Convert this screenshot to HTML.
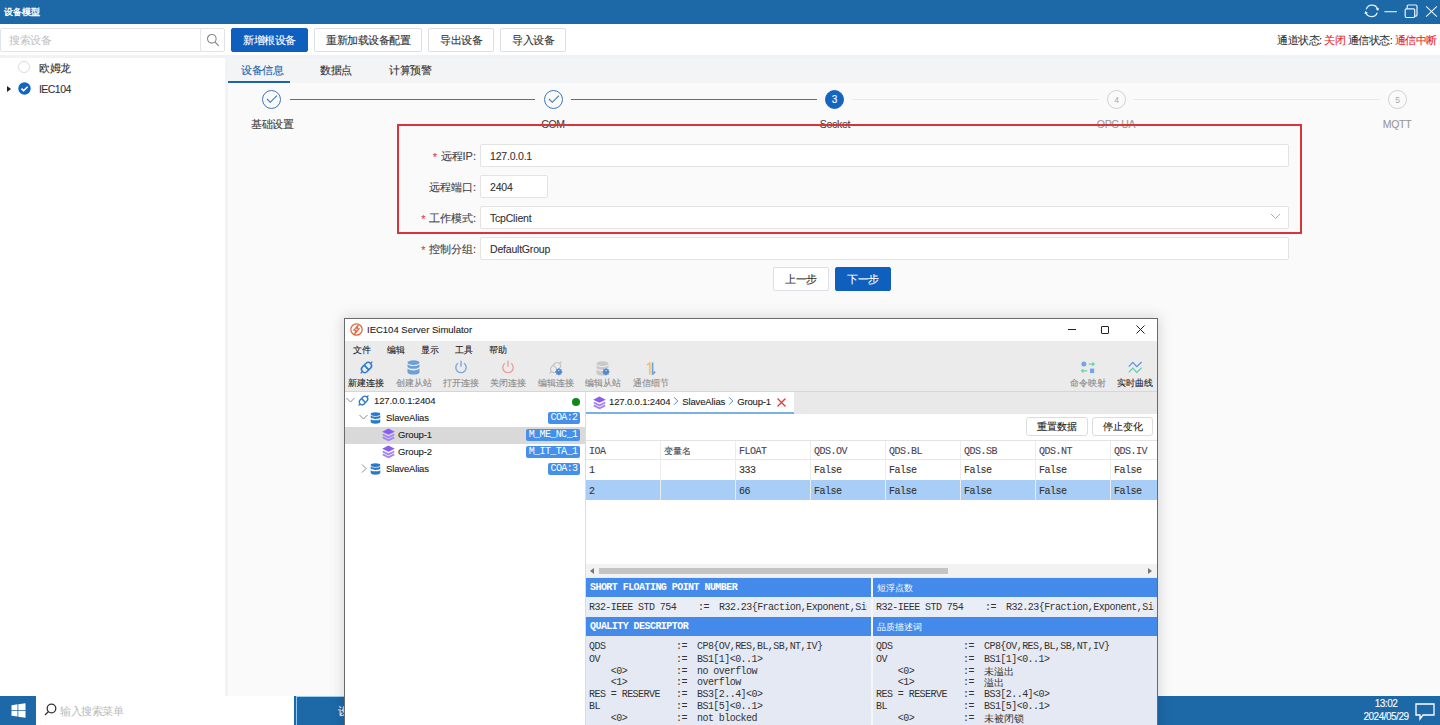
<!DOCTYPE html>
<html><head><meta charset="utf-8">
<style>
*{box-sizing:border-box;margin:0;padding:0}
html,body{width:1440px;height:725px;overflow:hidden;background:#fafafa;font-family:"Liberation Sans",sans-serif;color:#333;font-size:11px}
body div{-webkit-text-stroke:0.1px currentColor}
.a{position:absolute}
.hdr{left:0;top:0;width:1440px;height:24px;background:#1d69a8;color:#fff}
.tb{left:0;top:24px;width:1440px;height:31px;background:#fff}
.btn{position:absolute;top:28px;height:24px;border:1px solid #dcdfe6;border-radius:2px;background:#fff;color:#333;font-size:11px;letter-spacing:-0.5px;line-height:22px;text-align:center;white-space:nowrap}
.btnp{background:#0f5fbf;border-color:#0f5fbf;color:#fff}
.gap{left:0;top:55px;width:1440px;height:641px;background:#f0f2f5}
.tree{left:0;top:58px;width:225px;height:638px;background:#fff}
.content{left:228px;top:58px;width:1212px;height:638px;background:#fafafa}
.tabs{left:228px;top:58px;width:1212px;height:25px;background:#f3f4f6}
.tab{position:absolute;top:63px;font-size:11px;letter-spacing:-0.5px;color:#333;line-height:14px;white-space:nowrap}
.step{position:absolute;width:19px;height:19px;border-radius:50%;border:1px solid #3d76b8;top:90px;text-align:center;line-height:17px;font-size:10px}
.sline{position:absolute;top:99px;height:1px;background:#3d76b8}
.slabel{position:absolute;top:117px;width:120px;text-align:center;font-size:10.5px;letter-spacing:-0.3px;color:#444;line-height:14px}
.lbl{position:absolute;right:964px;font-size:11px;color:#444;text-align:right;line-height:14px;white-space:nowrap}
.inp{position:absolute;left:480px;height:23px;background:#fff;border:1px solid #e3e3e3;border-radius:2px;font-size:10.5px;letter-spacing:-0.2px;line-height:22.5px;padding-left:9px;color:#333}
.star{color:#e53935;margin-right:3.5px;position:relative;top:1px}

.menu{font-size:9px;line-height:12px;color:#222;white-space:nowrap}
.tlab{top:377px;font-size:9px;line-height:12px;color:#222;white-space:nowrap;width:36px;text-align:center}
.g{color:#8a8a8a}
.tt{font-size:9.5px;letter-spacing:-0.15px;line-height:12px;color:#222;white-space:nowrap}
.badge{-webkit-text-stroke:0 !important;height:11.5px;background:#4490ea;border-radius:2px;color:#fff;font-family:'Liberation Mono',monospace;font-size:10px;line-height:12.5px;text-align:center;letter-spacing:-0.6px}
.sbtn{height:19px;border:1px solid #dcdcdc;border-radius:3px;background:#fff;font-size:10px;line-height:17px;text-align:center;color:#222}
.th{top:445.5px;font-family:'Liberation Mono',monospace;font-size:10px;line-height:12px;color:#4a4458;letter-spacing:-0.5px;white-space:nowrap}
.td{font-family:'Liberation Mono',monospace;font-size:10px;line-height:12px;color:#333;letter-spacing:-0.5px;white-space:nowrap}
.ih{-webkit-text-stroke:0 !important;background:#448aea;color:#fff;font-family:'Liberation Mono',monospace;font-size:10px;font-weight:bold;line-height:20.5px;padding-left:4px;letter-spacing:-0.55px;white-space:nowrap;overflow:hidden}
.ir{height:20px;background:#e9edf6}
.mono{-webkit-text-stroke:0 !important;font-family:'Liberation Mono',monospace;font-size:10px;line-height:12px;color:#333;letter-spacing:-0.55px;white-space:nowrap}
.ql{line-height:11.9px}
.cj{font-family:'Liberation Sans',sans-serif;letter-spacing:0;font-size:10px}
</style></head><body>
<div class="a hdr">
  <div class="a" style="left:4px;top:6px;font-size:9px;line-height:12px;-webkit-text-stroke:0.35px #fff">设备模型</div>
  <svg class="a" style="left:1360px;top:0px" width="80" height="24" viewBox="0 0 80 24" fill="none" stroke="#e6f3ff" stroke-width="1.2"><path d="M17.6 9.2A6 6 0 0 0 6.2 9.4M5.8 12.4a6 6 0 0 0 11.4 0.3"/><path d="M16.2 8.6l1.6 1.4 0.6-2M7.4 13.2l-1.8-1.2-0.5 2"/><path d="M24.4 11.7h12.5" stroke-width="1.1"/><rect x="45.2" y="8.9" width="9.5" height="8.6" rx="1.2"/><path d="M47.2 8.9V6.2a1.2 1.2 0 0 1 1.2-1.2h7.4a1.2 1.2 0 0 1 1.2 1.2v8.7a1.2 1.2 0 0 1-1.2 1.2h-1.1"/><path d="M66.1 6.4l10.8 10.3M76.9 6.4L66.1 16.7" stroke-width="1.1"/></svg>
</div>
<div class="a tb"></div>
<div class="a gap"></div>
<div class="a tree"></div>
<div class="a content"></div>
<div class="a tabs"></div>

<!-- search -->
<div class="a" style="left:0;top:28px;width:225px;height:24px;border:1px solid #e0e3e8;border-radius:2px;background:#fff"></div>
<div class="a" style="left:200px;top:29px;width:1px;height:22px;background:#e6e6e6"></div>
<div class="a" style="left:9px;top:33px;font-size:11px;letter-spacing:-0.5px;color:#c0c0c0;line-height:14px;-webkit-text-stroke:0">搜索设备</div>
<svg class="a" style="left:206px;top:33px" width="14" height="14" viewBox="0 0 14 14" fill="none" stroke="#888" stroke-width="1.1"><circle cx="5.8" cy="5.8" r="4.3"/><path d="M9 9l3.8 3.8"/></svg>

<div class="btn btnp" style="left:231px;width:77px">新增根设备</div>
<div class="btn" style="left:314px;width:108px">重新加载设备配置</div>
<div class="btn" style="left:428px;width:66px">导出设备</div>
<div class="btn" style="left:500px;width:66px">导入设备</div>
<div class="a" style="left:1277px;top:33px;font-size:11px;letter-spacing:-0.5px;line-height:14px;color:#333;white-space:nowrap">通道状态: <span style="color:#e8262d">关闭</span> 通信状态: <span style="color:#e8262d">通信中断</span></div>

<!-- tree -->
<div class="a" style="left:18px;top:61px;width:12px;height:12px;border:1px solid #dcdcdc;border-radius:50%"></div>
<div class="a" style="left:39px;top:61px;font-size:11px;letter-spacing:-0.5px;line-height:14px;color:#333">欧姆龙</div>
<div class="a" style="left:7px;top:86.2px;width:0;height:0;border-left:4px solid #222;border-top:3px solid transparent;border-bottom:3px solid transparent"></div>
<svg class="a" style="left:18px;top:82px" width="13" height="13" viewBox="0 0 13 13"><circle cx="6.5" cy="6.5" r="6.2" fill="#1565c0"/><path d="M3.4 6.6l2.2 2.1 4-4" fill="none" stroke="#fff" stroke-width="1.6"/></svg>
<div class="a" style="left:39px;top:82px;font-size:10.5px;line-height:14px;color:#333;letter-spacing:-0.55px">IEC104</div>

<!-- tabs -->
<div class="tab" style="left:241px;color:#1d64b0">设备信息</div>
<div class="tab" style="left:320px">数据点</div>
<div class="tab" style="left:389px">计算预警</div>
<div class="a" style="left:228px;top:81px;width:62px;height:2px;background:#1d64b0"></div>

<!-- steps -->
<div class="step" style="left:262px"><svg width="17" height="17" viewBox="0 0 17 17" style="display:block"><path d="M4 8l3.3 3.3 6.6-6.6" fill="none" stroke="#3d76b8" stroke-width="1.1"/></svg></div>
<div class="sline" style="left:290px;width:245px"></div>
<div class="step" style="left:544px"><svg width="17" height="17" viewBox="0 0 17 17" style="display:block"><path d="M4 8l3.3 3.3 6.6-6.6" fill="none" stroke="#3d76b8" stroke-width="1.1"/></svg></div>
<div class="sline" style="left:571px;width:246px"></div>
<div class="step" style="left:825px;background:#1565c0;border-color:#1565c0;color:#fff">3</div>
<div class="sline" style="left:852px;width:246px;background:#e8e8e8"></div>
<div class="step" style="left:1107px;border-color:#d2d2d2;color:#aaa;font-size:8.5px;line-height:19px;-webkit-text-stroke:0">4</div>
<div class="sline" style="left:1134px;width:246px;background:#e8e8e8"></div>
<div class="step" style="left:1388px;border-color:#d2d2d2;color:#aaa;font-size:8.5px;line-height:19px;-webkit-text-stroke:0">5</div>
<div class="slabel" style="left:212px;font-size:11px;letter-spacing:-0.5px">基础设置</div>
<div class="slabel" style="left:493px">COM</div>
<div class="slabel" style="left:775px">Socket</div>
<div class="slabel" style="left:1056px;color:#999">OPC UA</div>
<div class="slabel" style="left:1337px;color:#999">MQTT</div>

<!-- form -->
<div class="lbl" style="top:149px"><span class="star">*</span>远程IP:</div>
<div class="inp" style="top:144px;width:809px">127.0.0.1</div>
<div class="lbl" style="top:180px">远程端口:</div>
<div class="inp" style="top:175px;width:68px">2404</div>
<div class="lbl" style="top:211px"><span class="star">*</span>工作模式:</div>
<div class="inp" style="top:206px;width:809px">TcpClient</div>
<svg class="a" style="left:1270px;top:213px" width="11" height="7" viewBox="0 0 11 7" fill="none" stroke="#aaa" stroke-width="1"><path d="M1 1l4.5 4.5L10 1"/></svg>
<div class="lbl" style="top:242px"><span class="star">*</span>控制分组:</div>
<div class="inp" style="top:237px;width:809px">DefaultGroup</div>
<div class="btn" style="left:773px;top:267px;width:56px;height:24px">上一步</div>
<div class="btn btnp" style="left:835px;top:267px;width:56px;height:24px">下一步</div>

<div class="a" style="left:397px;top:124px;width:905px;height:110px;border:2px solid #d8343c"></div>

<!-- taskbar -->
<div class="a" style="left:0;top:696px;width:1440px;height:29px;background:#fff"></div>
<div class="a" style="left:0;top:696px;width:36px;height:29px;background:#1d69a8"></div>
<svg class="a" style="left:11px;top:703px" width="15" height="15" viewBox="0 0 15 15" fill="#fff"><path d="M0.5 2.2L6.5 1.3V7H0.5zM7.3 1.2L14.5 0.2V7H7.3zM0.5 7.8H6.5V13.6L0.5 12.8zM7.3 7.8H14.5V14.8L7.3 13.8z"/></svg>
<svg class="a" style="left:44px;top:703px" width="13" height="13" viewBox="0 0 13 13" fill="none" stroke="#333" stroke-width="1.3"><circle cx="7.5" cy="5.5" r="4.3"/><path d="M4.5 8.5L1 12"/></svg>
<div class="a" style="left:60px;top:704px;font-size:11px;letter-spacing:-0.5px;line-height:14px;color:#bababa;-webkit-text-stroke:0">输入搜索菜单</div>
<div class="a" style="left:294px;top:696px;width:1146px;height:29px;background:#1d69a8"></div>
<div class="a" style="left:296px;top:696px;width:1px;height:29px;background:#8cc6f2"></div>
<div class="a" style="left:296px;top:696px;width:60px;height:1px;background:#9fd0f5"></div>
<div class="a" style="left:338px;top:704px;font-size:11px;line-height:14px;color:#fff;white-space:nowrap">设备模型</div>
<div class="a" style="left:1362px;top:697px;font-size:10px;letter-spacing:-0.5px;line-height:13px;color:#fff;width:48px;text-align:center">13:02</div>
<div class="a" style="left:1362px;top:710px;font-size:10px;letter-spacing:-0.5px;line-height:13px;color:#fff;width:48px;text-align:center">2024/05/29</div>
<svg class="a" style="left:1415px;top:703px" width="20" height="18" viewBox="0 0 20 18" fill="none" stroke="#fff" stroke-width="1.3"><path d="M1 1h18v11H8l-3 4v-4H1z"/></svg>
<!-- simulator window -->
<div class="a" style="left:344px;top:318px;width:814px;height:420px;box-shadow:0 0 12px 2px rgba(0,0,0,0.13);background:#fff;border:1px solid #6a6a6a"></div>
<div class="a" style="left:345px;top:319px;width:812px;height:22px;background:#fff"></div>
<svg class="a" style="left:350px;top:323px" width="13" height="13" viewBox="0 0 13 13"><circle cx="6.5" cy="6.5" r="5.7" fill="none" stroke="#e8603a" stroke-width="1.2"/><path d="M8.3 2.2L3.6 7.3h2.6L4.6 10.9 9.4 5.7H6.8z" fill="none" stroke="#e8603a" stroke-width="1.1" stroke-linejoin="round"/></svg>
<div class="a" style="left:367px;top:324px;font-size:9.5px;line-height:12px;color:#222;white-space:nowrap">IEC104 Server Simulator</div>
<div class="a" style="left:1067.5px;top:329px;width:8px;height:1.2px;background:#222"></div>
<div class="a" style="left:1101px;top:325.5px;width:8px;height:8px;border:1px solid #222;border-radius:1px"></div>
<svg class="a" style="left:1135.5px;top:325px" width="9" height="9" viewBox="0 0 9 9" stroke="#222" stroke-width="1"><path d="M0.5 0.5L8.5 8.5M8.5 0.5L0.5 8.5"/></svg>
<div class="a" style="left:345px;top:341px;width:812px;height:51px;background:#ebebeb"></div>
<div class="a" style="left:345px;top:391px;width:812px;height:1px;background:#d6d6d6"></div>
<div class="a menu" style="left:353px;top:344px">文件</div>
<div class="a menu" style="left:387px;top:344px">编辑</div>
<div class="a menu" style="left:421px;top:344px">显示</div>
<div class="a menu" style="left:455px;top:344px">工具</div>
<div class="a menu" style="left:489px;top:344px">帮助</div>
<!-- toolbar -->
<svg class="a" style="left:360px;top:361px;overflow:visible" width="13" height="13" viewBox="0 0 13 13"><g transform="rotate(45 6.5 6.5)" fill="none" stroke="#2e7bd0" stroke-width="1.5"><rect x="3.2" y="0.8" width="6.6" height="11.4" rx="3.3"/><path d="M3.2 6.5h6.6" stroke-width="1.8"/><path d="M6.5 -1.8v2.6M6.5 12.2V14.8" stroke-width="1.3"/></g></svg>
<svg class="a" style="left:407px;top:360px" width="13" height="15" viewBox="0 0 13 15" fill="#6c9fd6"><ellipse cx="6.5" cy="2.6" rx="6" ry="2.4"/><path d="M0.5 4.2c1.2 1.4 3.5 1.8 6 1.8s4.8-.4 6-1.8v2.8c-1.2 1.4-3.5 1.8-6 1.8s-4.8-.4-6-1.8z"/><path d="M0.5 8.6c1.2 1.4 3.5 1.8 6 1.8s4.8-.4 6-1.8v3.6c0 1.4-2.7 2.4-6 2.4s-6-1-6-2.4z"/></svg>
<svg class="a" style="left:454px;top:360px" width="14" height="14" viewBox="0 0 14 14" fill="none" stroke="#7aa8d8" stroke-width="1.4"><path d="M4 3.2a5.2 5.2 0 1 0 6 0"/><path d="M7 0.8v6"/></svg>
<svg class="a" style="left:501px;top:360px" width="14" height="14" viewBox="0 0 14 14" fill="none" stroke="#eaa0a0" stroke-width="1.4"><path d="M4 3.2a5.2 5.2 0 1 0 6 0"/><path d="M7 0.8v6"/></svg>
<svg class="a" style="left:549px;top:361px;overflow:visible" width="14" height="14" viewBox="0 0 14 14"><g transform="rotate(45 6.5 6.5)" fill="none" stroke="#c4c4c4" stroke-width="1.2"><rect x="3.2" y="0.8" width="6.6" height="11.4" rx="3.3"/><path d="M3.2 6.5h6.6M6.5 -1.8v2.6M6.5 12.2V14.8"/></g><g transform="translate(9.8 9.6) scale(0.72)"><path d="M-0.8 -3.2h1.6l0.3 1 0.9 0.4 0.9-0.5 1.1 1.1-0.5 0.9 0.4 0.9 1 0.3v1.6l-1 0.3-0.4 0.9 0.5 0.9-1.1 1.1-0.9-0.5-0.9 0.4-0.3 1h-1.6l-0.3-1-0.9-0.4-0.9 0.5-1.1-1.1 0.5-0.9-0.4-0.9-1-0.3v-1.6l1-0.3 0.4-0.9-0.5-0.9 1.1-1.1 0.9 0.5 0.9-0.4z" fill="#4a8ad4"/><circle r="1" fill="#ebebeb"/></g></svg>
<svg class="a" style="left:596px;top:361px" width="14" height="15" viewBox="0 0 14 15"><g fill="#c9c9c9"><ellipse cx="6.5" cy="2.6" rx="6" ry="2.4"/><path d="M0.5 4.2c1.2 1.4 3.5 1.8 6 1.8s4.8-.4 6-1.8v2.8c-1.2 1.4-3.5 1.8-6 1.8s-4.8-.4-6-1.8z"/><path d="M0.5 8.6c1.2 1.4 3.5 1.8 6 1.8s4.8-.4 6-1.8v3.6c0 1.4-2.7 2.4-6 2.4s-6-1-6-2.4z"/></g><g transform="translate(10 9.6) scale(0.72)"><path d="M-0.8 -3.2h1.6l0.3 1 0.9 0.4 0.9-0.5 1.1 1.1-0.5 0.9 0.4 0.9 1 0.3v1.6l-1 0.3-0.4 0.9 0.5 0.9-1.1 1.1-0.9-0.5-0.9 0.4-0.3 1h-1.6l-0.3-1-0.9-0.4-0.9 0.5-1.1-1.1 0.5-0.9-0.4-0.9-1-0.3v-1.6l1-0.3 0.4-0.9-0.5-0.9 1.1-1.1 0.9 0.5 0.9-0.4z" fill="#4a8ad4"/><circle r="1" fill="#ebebeb"/></g></svg>
<svg class="a" style="left:644px;top:362px" width="14" height="13" viewBox="0 0 14 13"><path d="M5.8 12.5V0.8L3.2 3.2" fill="none" stroke="#f2c46e" stroke-width="1.7"/><path d="M8.6 0.5v11.7l2.6-2.6" fill="none" stroke="#6ea2d9" stroke-width="1.7"/></svg>
<div class="a tlab" style="left:348px">新建连接</div>
<div class="a tlab g" style="left:396px">创建从站</div>
<div class="a tlab g" style="left:443px">打开连接</div>
<div class="a tlab g" style="left:490px">关闭连接</div>
<div class="a tlab g" style="left:538px">编辑连接</div>
<div class="a tlab g" style="left:585px">编辑从站</div>
<div class="a tlab g" style="left:633px">通信细节</div>
<svg class="a" style="left:1080px;top:360px" width="16" height="15" viewBox="0 0 16 15"><circle cx="3.9" cy="4.1" r="2.5" fill="#74a4ea"/><rect x="10" y="8.6" width="4.2" height="4.5" fill="#74a4ea"/><path d="M8.7 4.1h5.4M12.4 2.4l1.8 1.7-1.8 1.7M7.2 10.8H1.6M3.3 9.1l-1.7 1.7 1.7 1.7" fill="none" stroke="#6ad2ac" stroke-width="1.2"/></svg>
<svg class="a" style="left:1128px;top:361px" width="15" height="13" viewBox="0 0 15 13" fill="none" stroke-width="1.2"><path d="M0.8 5.6L4.8 1.4 8.8 5.6 13.6 1" stroke="#5b93dc"/><path d="M0.8 11.4L4.8 7.2 8.8 11.4 13.6 6.8" stroke="#5ccfa2"/></svg>
<div class="a tlab g" style="left:1070px">命令映射</div>
<div class="a tlab" style="left:1117px">实时曲线</div>

<!-- tree -->
<div class="a" style="left:345px;top:392px;width:240px;height:346px;background:#fff"></div>
<div class="a" style="left:585px;top:392px;width:1px;height:346px;background:#dcdcdc"></div>
<div class="a" style="left:345px;top:427px;width:240px;height:17px;background:#d9d9d9"></div>
<svg class="a" style="left:346px;top:397px" width="9" height="7" viewBox="0 0 9 7" fill="none" stroke="#888" stroke-width="1"><path d="M0.5 1l4 4 4-4"/></svg>
<svg class="a" style="left:358px;top:395px;overflow:visible" width="11" height="11" viewBox="0 0 13 13"><g transform="rotate(45 6.5 6.5)" fill="none" stroke="#2e7bd0" stroke-width="1.6"><rect x="3.2" y="0.8" width="6.6" height="11.4" rx="3.3"/><path d="M3.2 6.5h6.6" stroke-width="1.9"/><path d="M6.5 -1.8v2.6M6.5 12.2V14.8" stroke-width="1.4"/></g></svg>
<div class="a tt" style="left:374px;top:395px">127.0.0.1:2404</div>
<div class="a" style="left:572px;top:398px;width:8px;height:8px;border-radius:50%;background:#0a8a1a"></div>
<svg class="a" style="left:359px;top:414px" width="9" height="7" viewBox="0 0 9 7" fill="none" stroke="#888" stroke-width="1"><path d="M0.5 1l4 4 4-4"/></svg>
<svg class="a db" style="left:370px;top:412px" width="11" height="12" viewBox="0 0 13 15" fill="#2a78c8"><ellipse cx="6.5" cy="2.6" rx="6" ry="2.4"/><path d="M0.5 4.2c1.2 1.4 3.5 1.8 6 1.8s4.8-.4 6-1.8v2.8c-1.2 1.4-3.5 1.8-6 1.8s-4.8-.4-6-1.8z"/><path d="M0.5 8.6c1.2 1.4 3.5 1.8 6 1.8s4.8-.4 6-1.8v3.6c0 1.4-2.7 2.4-6 2.4s-6-1-6-2.4z"/></svg>
<div class="a tt" style="left:386px;top:412px">SlaveAlias</div>
<div class="a badge" style="left:548px;top:412px;width:32px">COA:2</div>
<svg class="a" style="left:382px;top:428px" width="13" height="13" viewBox="0 0 13 13"><path d="M6.5 0.6l6.3 3.1-6.3 3.1L0.2 3.7z" fill="#8a5cf3"/><path d="M0.8 6.5l5.7 2.9 5.7-2.9" fill="none" stroke="#a485f6" stroke-width="1.9"/><path d="M0.8 9.4l5.7 2.9 5.7-2.9" fill="none" stroke="#a485f6" stroke-width="1.9"/></svg>
<div class="a tt" style="left:398px;top:429px">Group-1</div>
<div class="a badge" style="left:526px;top:429px;width:54px">M_ME_NC_1</div>
<svg class="a" style="left:382px;top:445px" width="13" height="13" viewBox="0 0 13 13"><path d="M6.5 0.6l6.3 3.1-6.3 3.1L0.2 3.7z" fill="#8a5cf3"/><path d="M0.8 6.5l5.7 2.9 5.7-2.9" fill="none" stroke="#a485f6" stroke-width="1.9"/><path d="M0.8 9.4l5.7 2.9 5.7-2.9" fill="none" stroke="#a485f6" stroke-width="1.9"/></svg>
<div class="a tt" style="left:398px;top:446px">Group-2</div>
<div class="a badge" style="left:526px;top:446px;width:54px">M_IT_TA_1</div>
<svg class="a" style="left:361px;top:464px" width="7" height="9" viewBox="0 0 7 9" fill="none" stroke="#888" stroke-width="1"><path d="M1 0.5l4 4-4 4"/></svg>
<svg class="a" style="left:370px;top:463px" width="11" height="12" viewBox="0 0 13 15" fill="#2a78c8"><ellipse cx="6.5" cy="2.6" rx="6" ry="2.4"/><path d="M0.5 4.2c1.2 1.4 3.5 1.8 6 1.8s4.8-.4 6-1.8v2.8c-1.2 1.4-3.5 1.8-6 1.8s-4.8-.4-6-1.8z"/><path d="M0.5 8.6c1.2 1.4 3.5 1.8 6 1.8s4.8-.4 6-1.8v3.6c0 1.4-2.7 2.4-6 2.4s-6-1-6-2.4z"/></svg>
<div class="a tt" style="left:386px;top:463px">SlaveAlias</div>
<div class="a badge" style="left:548px;top:463px;width:32px">COA:3</div>

<!-- right panel -->
<div class="a" style="left:586px;top:392px;width:571px;height:22px;background:#e9e9e9"></div>
<div class="a" style="left:586px;top:392px;width:208px;height:22px;background:#fff;border-bottom:2px solid #7ab0ea"></div>
<svg class="a" style="left:593px;top:396px" width="13" height="13" viewBox="0 0 13 13"><path d="M6.5 0.6l6.3 3.1-6.3 3.1L0.2 3.7z" fill="#8a5cf3"/><path d="M0.8 6.5l5.7 2.9 5.7-2.9" fill="none" stroke="#a485f6" stroke-width="1.9"/><path d="M0.8 9.4l5.7 2.9 5.7-2.9" fill="none" stroke="#a485f6" stroke-width="1.9"/></svg>
<div class="a tt" style="left:609px;top:396px">127.0.0.1:2404<svg width="12" height="10" viewBox="0 0 12 10" style="vertical-align:-1px"><path d="M4 1.2l3.8 3.8-3.8 3.8" fill="none" stroke="#4a90d9" stroke-width="1"/></svg>SlaveAlias<svg width="12" height="10" viewBox="0 0 12 10" style="vertical-align:-1px"><path d="M4 1.2l3.8 3.8-3.8 3.8" fill="none" stroke="#4a90d9" stroke-width="1"/></svg>Group-1</div>
<svg class="a" style="left:777px;top:397.5px" width="9" height="9" viewBox="0 0 9 9" stroke="#e53935" stroke-width="1.3"><path d="M0.5 0.5l8 8M8.5 0.5l-8 8"/></svg>
<div class="a sbtn" style="left:1026px;top:417px;width:62px">重置数据</div>
<div class="a sbtn" style="left:1092px;top:417px;width:61px">停止变化</div>

<!-- table -->
<div class="a" style="left:586px;top:440px;width:571px;height:1px;background:#e3e3e3"></div>
<div class="a" style="left:586px;top:459px;width:571px;height:1px;background:#e6e6e6"></div>
<div class="a" style="left:586px;top:480px;width:571px;height:20px;background:#a8cdf7"></div>
<div class="a" style="left:660px;top:441px;width:1px;height:59px;background:#ececec"></div>
<div class="a" style="left:735px;top:441px;width:1px;height:59px;background:#ececec"></div>
<div class="a" style="left:810px;top:441px;width:1px;height:59px;background:#ececec"></div>
<div class="a" style="left:885px;top:441px;width:1px;height:59px;background:#ececec"></div>
<div class="a" style="left:960px;top:441px;width:1px;height:59px;background:#ececec"></div>
<div class="a" style="left:1035px;top:441px;width:1px;height:59px;background:#ececec"></div>
<div class="a" style="left:1110px;top:441px;width:1px;height:59px;background:#ececec"></div>
<div class="a th" style="left:589px">IOA</div>
<div class="a th" style="left:664px;top:444.5px;font-family:'Liberation Sans',sans-serif;font-size:9px;letter-spacing:0">变量名</div>
<div class="a th" style="left:739px">FLOAT</div>
<div class="a th" style="left:814px">QDS.OV</div>
<div class="a th" style="left:889px">QDS.BL</div>
<div class="a th" style="left:964px">QDS.SB</div>
<div class="a th" style="left:1039px">QDS.NT</div>
<div class="a th" style="left:1114px">QDS.IV</div>
<div class="a td" style="top:465px;left:589px">1</div>
<div class="a td" style="top:465px;left:739px">333</div>
<div class="a td" style="top:465px;left:814px">False</div>
<div class="a td" style="top:465px;left:889px">False</div>
<div class="a td" style="top:465px;left:964px">False</div>
<div class="a td" style="top:465px;left:1039px">False</div>
<div class="a td" style="top:465px;left:1114px">False</div>
<div class="a td" style="top:485.5px;left:589px">2</div>
<div class="a td" style="top:485.5px;left:739px">66</div>
<div class="a td" style="top:485.5px;left:814px">False</div>
<div class="a td" style="top:485.5px;left:889px">False</div>
<div class="a td" style="top:485.5px;left:964px">False</div>
<div class="a td" style="top:485.5px;left:1039px">False</div>
<div class="a td" style="top:485.5px;left:1114px">False</div>

<!-- scrollbar -->
<div class="a" style="left:586px;top:564px;width:571px;height:13px;background:#f2f2f2"></div>
<div class="a" style="left:599px;top:568px;width:349px;height:6px;background:#c4c4c4"></div>
<div class="a" style="left:590px;top:568px;width:0;height:0;border-right:4px solid #777;border-top:3px solid transparent;border-bottom:3px solid transparent"></div>
<div class="a" style="left:1148px;top:568px;width:0;height:0;border-left:4px solid #777;border-top:3px solid transparent;border-bottom:3px solid transparent"></div>

<!-- info panels -->
<div class="a" style="left:586px;top:577px;width:571px;height:161px;background:#e4e9f3"></div>
<div class="a ih" style="left:586px;top:578px;width:285px;height:19px">SHORT FLOATING POINT NUMBER</div>
<div class="a ih" style="left:873px;top:578px;width:284px;height:19px;font-family:'Liberation Sans',sans-serif;font-size:9px;font-weight:normal;letter-spacing:0">短浮点数</div>
<div class="a ir" style="left:586px;top:597px;width:285px"></div>
<div class="a ir" style="left:873px;top:597px;width:281px"></div>
<div class="a ih" style="left:586px;top:617px;width:285px;height:19px">QUALITY DESCRIPTOR</div>
<div class="a ih" style="left:873px;top:617px;width:284px;height:19px;font-family:'Liberation Sans',sans-serif;font-size:9px;font-weight:normal;letter-spacing:0">品质描述词</div>
<div class="a" style="left:871px;top:577px;width:2px;height:161px;background:#f4f6fa"></div>
<div class="a mono" style="left:589px;top:602px">R32-IEEE STD 754</div>
<div class="a mono" style="left:698px;top:602px">:=</div>
<div class="a mono" style="left:719px;top:602px;width:148px;overflow:hidden">R32.23{Fraction,Exponent,Sign}</div>
<div class="a mono" style="left:876px;top:602px">R32-IEEE STD 754</div>
<div class="a mono" style="left:985px;top:602px">:=</div>
<div class="a mono" style="left:1006px;top:602px;width:148px;overflow:hidden">R32.23{Fraction,Exponent,Sign}</div>

<div class="a mono" style="left:589px;top:641.4px">QDS</div>
<div class="a mono" style="left:676px;top:641.4px">:=</div>
<div class="a mono" style="left:697px;top:641.4px">CP8{OV,RES,BL,SB,NT,IV}</div>
<div class="a mono" style="left:589px;top:653.5px">OV</div>
<div class="a mono" style="left:676px;top:653.5px">:=</div>
<div class="a mono" style="left:697px;top:653.5px">BS1[1]&lt;0..1&gt;</div>
<div class="a mono" style="left:589px;top:665.6px">&nbsp;&nbsp;&nbsp;&nbsp;&lt;0&gt;</div>
<div class="a mono" style="left:676px;top:665.6px">:=</div>
<div class="a mono" style="left:697px;top:665.6px">no overflow</div>
<div class="a mono" style="left:589px;top:677.4px">&nbsp;&nbsp;&nbsp;&nbsp;&lt;1&gt;</div>
<div class="a mono" style="left:676px;top:677.4px">:=</div>
<div class="a mono" style="left:697px;top:677.4px">overflow</div>
<div class="a mono" style="left:589px;top:689.3px">RES = RESERVE</div>
<div class="a mono" style="left:676px;top:689.3px">:=</div>
<div class="a mono" style="left:697px;top:689.3px">BS3[2..4]&lt;0&gt;</div>
<div class="a mono" style="left:589px;top:701.0px">BL</div>
<div class="a mono" style="left:676px;top:701.0px">:=</div>
<div class="a mono" style="left:697px;top:701.0px">BS1[5]&lt;0..1&gt;</div>
<div class="a mono" style="left:589px;top:712.9px">&nbsp;&nbsp;&nbsp;&nbsp;&lt;0&gt;</div>
<div class="a mono" style="left:676px;top:712.9px">:=</div>
<div class="a mono" style="left:697px;top:712.9px">not blocked</div>
<div class="a mono" style="left:876px;top:641.4px">QDS</div>
<div class="a mono" style="left:963px;top:641.4px">:=</div>
<div class="a mono" style="left:984px;top:641.4px">CP8{OV,RES,BL,SB,NT,IV}</div>
<div class="a mono" style="left:876px;top:653.5px">OV</div>
<div class="a mono" style="left:963px;top:653.5px">:=</div>
<div class="a mono" style="left:984px;top:653.5px">BS1[1]&lt;0..1&gt;</div>
<div class="a mono" style="left:876px;top:665.6px">&nbsp;&nbsp;&nbsp;&nbsp;&lt;0&gt;</div>
<div class="a mono" style="left:963px;top:665.6px">:=</div>
<div class="a mono" style="left:984px;top:665.6px"><span class="cj">未溢出</span></div>
<div class="a mono" style="left:876px;top:677.4px">&nbsp;&nbsp;&nbsp;&nbsp;&lt;1&gt;</div>
<div class="a mono" style="left:963px;top:677.4px">:=</div>
<div class="a mono" style="left:984px;top:677.4px"><span class="cj">溢出</span></div>
<div class="a mono" style="left:876px;top:689.3px">RES = RESERVE</div>
<div class="a mono" style="left:963px;top:689.3px">:=</div>
<div class="a mono" style="left:984px;top:689.3px">BS3[2..4]&lt;0&gt;</div>
<div class="a mono" style="left:876px;top:701.0px">BL</div>
<div class="a mono" style="left:963px;top:701.0px">:=</div>
<div class="a mono" style="left:984px;top:701.0px">BS1[5]&lt;0..1&gt;</div>
<div class="a mono" style="left:876px;top:712.9px">&nbsp;&nbsp;&nbsp;&nbsp;&lt;0&gt;</div>
<div class="a mono" style="left:963px;top:712.9px">:=</div>
<div class="a mono" style="left:984px;top:712.9px"><span class="cj">未被闭锁</span></div>
<!-- right shadow / taskbar over -->
</body></html>
